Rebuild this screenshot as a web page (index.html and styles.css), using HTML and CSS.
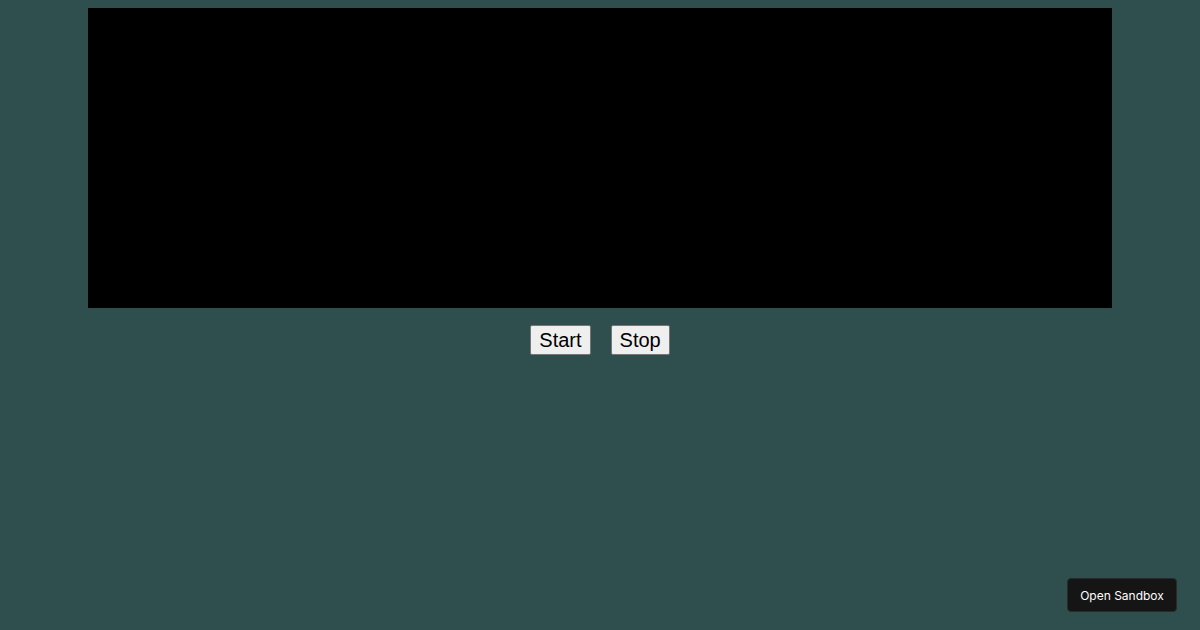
FILE: index.html
```html
<!DOCTYPE html>
<html>
<head>
<meta charset="utf-8">
<link rel="stylesheet" href="styles.css">
</head>
<body>
<div class="stage"></div>
<div class="controls">
  <button class="btn">Start</button>
  <button class="btn">Stop</button>
</div>
<a class="sandbox">Open Sandbox</a>
</body>
</html>
```
FILE: styles.css
```css
html, body {
  height: 100%;
}
body {
  margin: 8px;
  background: #2f4f4f;
  font-family: "Liberation Sans", Arial, sans-serif;
  overflow: hidden;
}
.stage {
  width: 1024px;
  height: 300px;
  margin: 0 auto;
  background: #000;
}
.controls {
  display: flex;
  justify-content: center;
  gap: 20px;
  margin-top: 17px;
}
.btn {
  font-family: "Liberation Sans", Arial, sans-serif;
  font-size: 20px;
  line-height: 24px;
  padding: 2px 8px;
  background: #efefef;
  color: #000;
  border: 1px solid #767676;
  border-radius: 2px;
}
.sandbox {
  position: fixed;
  right: 23px;
  bottom: 18px;
  width: 110px;
  height: 34px;
  box-sizing: border-box;
  display: flex;
  align-items: center;
  justify-content: center;
  background: #151515;
  color: #fff;
  font-family: Inter, "Liberation Sans", sans-serif;
  font-size: 12px;
  border: 1px solid #2a2a2a;
  border-radius: 4px;
}
```
